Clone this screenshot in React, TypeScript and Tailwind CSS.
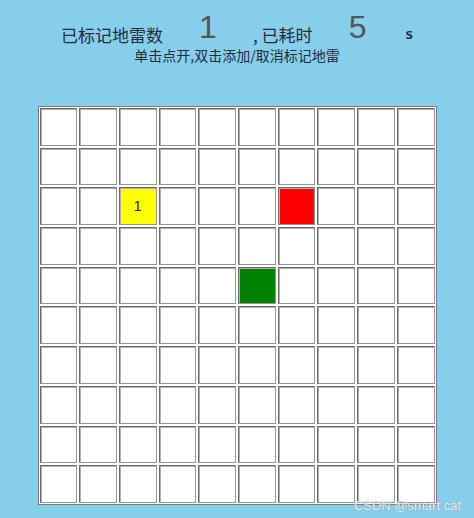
import React from "react";

const SIZE = 10;

// cells with a state other than hidden
const special: Record<string, { bg: string; text?: string }> = {
  "2-2": { bg: "bg-[#ffff00]", text: "1" },
  "2-6": { bg: "bg-[#ff0000]" },
  "4-5": { bg: "bg-[#008000]" },
};

function Cell({ r, c }: { r: number; c: number }) {
  const s = special[`${r}-${c}`];
  return (
    <div
      className={`h-[37.7px] border border-t-[#6a6a6a] border-l-[#6a6a6a] border-r-[#959595] border-b-[#959595] shadow-[inset_1px_1px_0_#b0b0b0] flex items-center justify-center text-[14px] text-[#222] font-['Liberation_Sans',sans-serif] ${s ? s.bg : "bg-white"}`}
    >
      {s?.text}
    </div>
  );
}

export default function App() {
  const cells = [];
  for (let r = 0; r < SIZE; r++) {
    for (let c = 0; c < SIZE; c++) {
      cells.push(<Cell key={`${r}-${c}`} r={r} c={c} />);
    }
  }

  return (
    <main className="relative w-full h-[518px] bg-[#87ceeb] font-['Noto_Sans_CJK_SC',sans-serif] text-[#1f2d3d] overflow-hidden">
      {/* status line */}
      <div className="flex justify-center items-start">
        <span className="mt-[26px] text-[17px] leading-[17px]">已标记地雷数</span>
        <span className="w-[90px] text-center mt-[11px] text-[32px] leading-[32px] text-[#555] font-['Liberation_Sans',sans-serif]">
          1
        </span>
        <span className="mt-[26px] text-[17px] leading-[17px]">, 已耗时</span>
        <span className="w-[90px] text-center mt-[11px] text-[32px] leading-[32px] text-[#555] font-['Liberation_Sans',sans-serif]">
          5
        </span>
        <span className="ml-[3px] mt-[26px] text-[15px] leading-[15px] font-semibold font-['Noto_Sans',sans-serif]">
          s
        </span>
      </div>
      <p className="mt-[5px] text-center text-[14px] leading-[14px]">
        单击点开,双击添加/取消标记地雷
      </p>

      {/* board */}
      <div className="mt-[44px] mx-auto w-[399px] border border-[#7a7a7a] bg-white p-[1px] grid grid-cols-10 gap-[2px]">
        {cells}
      </div>

      <span className="absolute right-[13px] bottom-[6px] text-[13px] leading-[13px] text-white/85 font-['Liberation_Sans',sans-serif] [text-shadow:0_0_1px_#777]">
        CSDN @smart cat
      </span>
    </main>
  );
}
